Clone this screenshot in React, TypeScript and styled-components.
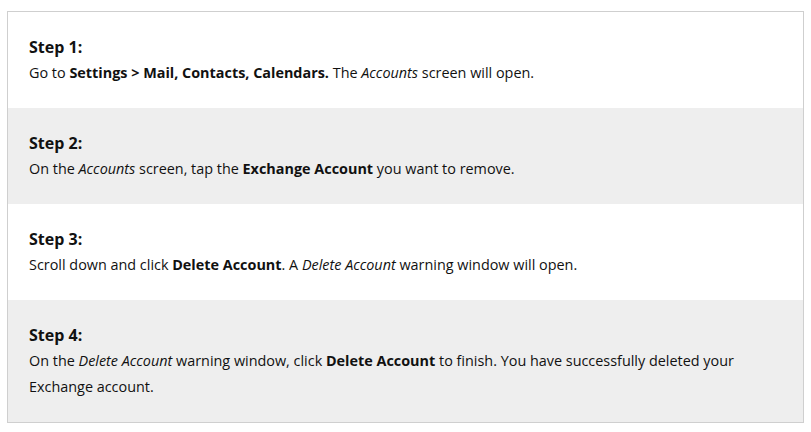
import React from "react";
import styled, { createGlobalStyle } from "styled-components";

const Global = createGlobalStyle`
  body { margin: 0; background: #fff; font-family: "Open Sans", sans-serif; color: #111; }
`;

const Wrap = styled.div`
  padding: 11px 0 0 7px;
  width: 797px;
`;

const Box = styled.div`
  border: 1px solid #cfcfcf;
  display: flex;
  flex-direction: column;
`;

const Step = styled.div<{ $alt?: boolean }>`
  background: ${(p) => (p.$alt ? "#eeeeee" : "#ffffff")};
  padding: 24px 21px 22px;
  display: flex;
  flex-direction: column;
  gap: 2px;
`;

const Title = styled.div`
  font-size: 16px;
  font-weight: 700;
  line-height: 22px;
`;

const Body = styled.div`
  font-size: 14.4px;
  line-height: 26px;
  max-width: 720px;
`;

export default function App() {
  return (
    <Wrap>
      <Global />
      <Box>
        <Step>
          <Title>Step 1:</Title>
          <Body>
            Go to <b>Settings &gt; Mail, Contacts, Calendars.</b> The <i>Accounts</i> screen will open.
          </Body>
        </Step>
        <Step $alt>
          <Title>Step 2:</Title>
          <Body>
            On the <i>Accounts</i> screen, tap the <b>Exchange Account</b> you want to remove.
          </Body>
        </Step>
        <Step>
          <Title>Step 3:</Title>
          <Body>
            Scroll down and click <b>Delete Account</b>. A <i>Delete Account</i> warning window will open.
          </Body>
        </Step>
        <Step $alt>
          <Title>Step 4:</Title>
          <Body>
            On the <i>Delete Account</i> warning window, click <b>Delete Account</b> to finish. You have successfully deleted your
            Exchange account.
          </Body>
        </Step>
      </Box>
    </Wrap>
  );
}
